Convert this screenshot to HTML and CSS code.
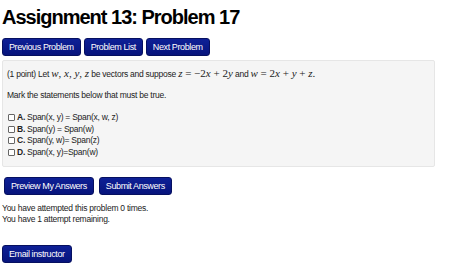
FILE: index.html
```html
<!DOCTYPE html>
<html lang="en">
<head>
    <meta charset="UTF-8">
    <title>Assignment 13: Problem 17</title>
    <link rel="stylesheet" href="styles.css">
</head>
<body>
    <h1 class="title">Assignment 13: Problem 17</h1>
    <div class="nav">
        <a href="#" class="btn">Previous Problem</a>
        <a href="#" class="btn">Problem List</a>
        <a href="#" class="btn">Next Problem</a>
    </div>
    <div class="problem">
        <p class="intro">(1 point) Let <span class="math"><i>w</i>, <i>x</i>, <i>y</i>, <i>z</i></span> be vectors and suppose <span class="math"><i>z</i> = &minus;2<i>x</i> + 2<i>y</i></span> and <span class="math"><i>w</i> = 2<i>x</i> + <i>y</i> + <i>z</i>.</span></p>
        <p class="mark">Mark the statements below that must be true.</p>
        <ul class="choices">
            <li><label><input type="checkbox"><b>A.</b> Span(x, y) = Span(x, w, z)</label></li>
            <li><label><input type="checkbox"><b>B.</b> Span(y) = Span(w)</label></li>
            <li><label><input type="checkbox"><b>C.</b> Span(y, w)= Span(z)</label></li>
            <li><label><input type="checkbox"><b>D.</b> Span(x, y)=Span(w)</label></li>
        </ul>
    </div>
    <div class="submit">
        <a href="#" class="btn">Preview My Answers</a>
        <a href="#" class="btn">Submit Answers</a>
    </div>
    <p class="attempts">You have attempted this problem 0 times.<br>You have 1 attempt remaining.</p>
    <div class="email">
        <a href="#" class="btn">Email instructor</a>
    </div>
</body>
</html>
```

FILE: styles.css
```css
body {
    font-family: "Liberation Sans", Arial, sans-serif;
    font-size: 8.5px;
    letter-spacing: -0.25px;
    color: #222;
    margin: 0;
    padding: 0 2px;
    background: #fff;
}
.title {
    font-size: 20px;
    letter-spacing: -1px;
    font-weight: bold;
    color: #000;
    margin: 0;
    padding-top: 4px;
    line-height: 26px;
}
.btn {
    display: inline-block;
    background: linear-gradient(#0e2096, #07147c);
    color: #fff;
    text-decoration: none;
    font-size: 9px;
    letter-spacing: -0.4px;
    line-height: 16px;
    padding: 0 6px;
    border-radius: 3px;
    border: 1px solid #061060;
}
.nav {
    display: flex;
    gap: 3px;
    margin-top: 8px;
}
.problem {
    margin-top: 4px;
    width: 433px;
    background: #f5f5f5;
    border: 1px solid #e6e6e6;
    border-radius: 2px;
    padding: 6px 0 8px 4px;
    box-sizing: border-box;
}
.problem p {
    margin: 0;
    line-height: 12px;
}
.mark {
    margin-top: 9px !important;
}
.math {
    font-family: "Liberation Serif", "Times New Roman", serif;
    font-size: 11px;
    letter-spacing: 0;
}
.choices {
    list-style: none;
    margin: 11px 0 0;
    padding: 0;
}
.choices li {
    line-height: 11.5px;
    height: 11.5px;
}
.choices label {
    display: flex;
    align-items: center;
}
.choices input {
    appearance: none;
    width: 7px;
    height: 7px;
    margin: 0 2px 0 1px;
    border: 1px solid #666;
    border-radius: 1px;
    background: #fff;
}
.choices b {
    margin-right: 2px;
}
.submit {
    display: flex;
    gap: 5px;
    margin: 10px 0 0 2px;
}
.attempts {
    margin: 8px 0 0;
    line-height: 11px;
}
.email {
    margin-top: 20px;
}
```
